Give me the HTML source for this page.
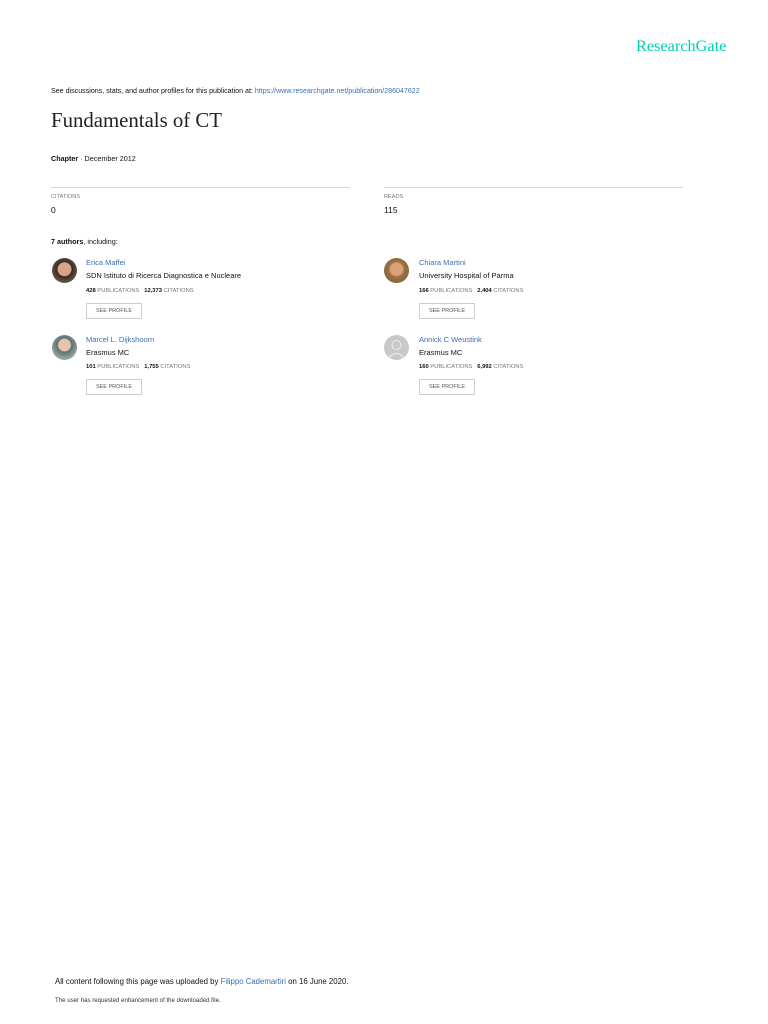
<!DOCTYPE html>
<html><head><meta charset="utf-8"><style>
*{margin:0;padding:0;box-sizing:border-box}
body{width:768px;height:1024px;background:#fff;position:relative;font-family:"Liberation Sans",sans-serif;color:#111;overflow:hidden}
.a{position:absolute;white-space:nowrap;line-height:1}
.lnk{color:#3c6fb0}
.g{color:#777}
.hr{position:absolute;height:1px;background:#d6d6d6;top:187px}
.av{position:absolute;width:25px;height:25px;border-radius:50%}
.btn{position:absolute;width:56px;height:16px;border:1px solid #ccc;font-size:5.5px;color:#555;text-align:center;line-height:14px;border-radius:1px}
.st{font-size:5.8px}
</style></head><body>
<div class="a" style="left:636px;top:38px;font-family:'Liberation Serif',serif;font-size:16.3px;color:#00d0af">ResearchGate</div>
<div class="a" style="left:51px;top:88px;font-size:7.1px">See discussions, stats, and author profiles for this publication at: <span class="lnk">https://www.researchgate.net/publication/286047622</span></div>
<div class="a" style="left:51px;top:111px;font-family:'Liberation Serif',serif;font-size:20.8px;color:#222">Fundamentals of CT</div>
<div class="a" style="left:51px;top:155px;font-size:7.2px"><b>Chapter</b> · December 2012</div>
<div class="hr" style="left:51px;width:299px"></div>
<div class="hr" style="left:384px;width:299px"></div>
<div class="a g" style="left:51px;top:195px;font-size:5.6px">CITATIONS</div>
<div class="a" style="left:51px;top:206px;font-size:8.5px">0</div>
<div class="a g" style="left:384px;top:195px;font-size:5.6px">READS</div>
<div class="a" style="left:384px;top:206px;font-size:8.5px">115</div>
<div class="a" style="left:51px;top:238px;font-size:7.2px"><b>7 authors</b>, including:</div>

<div class="av" style="left:52px;top:258px;background:radial-gradient(circle at 50% 45%,#d9a486 0 35%,#3b2a22 40%,#8a7a70 100%)"></div>
<div class="a lnk" style="left:86px;top:259px;font-size:7.5px">Erica Maffei</div>
<div class="a" style="left:86px;top:272px;font-size:7.5px">SDN Istituto di Ricerca Diagnostica e Nucleare</div>
<div class="a st" style="left:86px;top:289px"><b>428</b> <span class="g">PUBLICATIONS</span> &nbsp; <b>12,373</b> <span class="g">CITATIONS</span></div>
<div class="btn" style="left:86px;top:303px">SEE PROFILE</div>

<div class="av" style="left:52px;top:335px;background:radial-gradient(circle at 50% 40%,#e8c3ad 0 30%,#5a7370 36%,#c9cfd0 100%)"></div>
<div class="a lnk" style="left:86px;top:336px;font-size:7.5px">Marcel L. Dijkshoorn</div>
<div class="a" style="left:86px;top:349px;font-size:7.5px">Erasmus MC</div>
<div class="a st" style="left:86px;top:365px"><b>101</b> <span class="g">PUBLICATIONS</span> &nbsp; <b>1,755</b> <span class="g">CITATIONS</span></div>
<div class="btn" style="left:86px;top:379px">SEE PROFILE</div>

<div class="av" style="left:384px;top:258px;background:radial-gradient(circle at 50% 45%,#d9a27c 0 32%,#a0703f 42%,#6e5a3d 100%)"></div>
<div class="a lnk" style="left:419px;top:259px;font-size:7.5px">Chiara Martini</div>
<div class="a" style="left:419px;top:272px;font-size:7.5px">University Hospital of Parma</div>
<div class="a st" style="left:419px;top:289px"><b>166</b> <span class="g">PUBLICATIONS</span> &nbsp; <b>2,404</b> <span class="g">CITATIONS</span></div>
<div class="btn" style="left:419px;top:303px">SEE PROFILE</div>

<div class="av" style="left:384px;top:335px;background:#c8c8c8;overflow:hidden"><svg width="25" height="25"><circle cx="12.5" cy="10" r="4.5" fill="none" stroke="#eee" stroke-width="1"/><path d="M4 24 Q12.5 13 21 24" fill="none" stroke="#eee" stroke-width="1"/></svg></div>
<div class="a lnk" style="left:419px;top:336px;font-size:7.5px">Annick C Weustink</div>
<div class="a" style="left:419px;top:349px;font-size:7.5px">Erasmus MC</div>
<div class="a st" style="left:419px;top:365px"><b>160</b> <span class="g">PUBLICATIONS</span> &nbsp; <b>6,992</b> <span class="g">CITATIONS</span></div>
<div class="btn" style="left:419px;top:379px">SEE PROFILE</div>

<div class="a" style="left:55px;top:978px;font-size:7.8px">All content following this page was uploaded by <span class="lnk">Filippo Cademartiri</span> on 16 June 2020.</div>
<div class="a" style="left:55px;top:998px;font-size:6.1px;color:#333">The user has requested enhancement of the downloaded file.</div>
</body></html>
